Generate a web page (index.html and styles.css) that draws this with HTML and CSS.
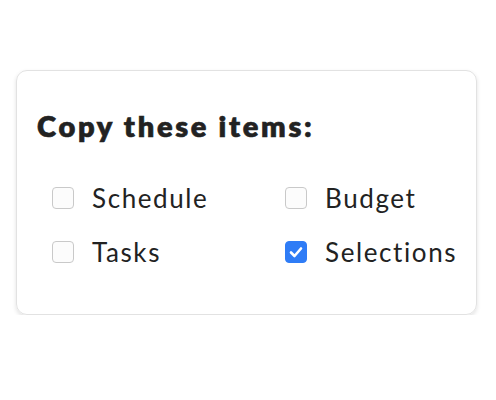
FILE: index.html
```html
<!DOCTYPE html>
<html>
<head>
<meta charset="utf-8">
<link rel="stylesheet" href="styles.css">
</head>
<body>
<div class="card">
  <h2 class="title">Copy these items:</h2>
  <div class="options">
    <label class="option"><span class="box"></span><span class="label">Schedule</span></label>
    <label class="option"><span class="box"></span><span class="label">Budget</span></label>
    <label class="option"><span class="box"></span><span class="label">Tasks</span></label>
    <label class="option"><span class="box checked"><svg viewBox="0 0 22 22" width="22" height="22"><path d="M6 11.5 L9.5 15 L16 7.5" fill="none" stroke="#fff" stroke-width="2.6" stroke-linecap="round" stroke-linejoin="round"/></svg></span><span class="label">Selections</span></label>
  </div>
</div>
</body>
</html>
```
FILE: styles.css
```css
html, body {
  margin: 0;
  padding: 0;
  background: #fff;
}
body {
  padding: 70px 19px 0 16px;
  font-family: Lato, "Noto Sans", sans-serif;
  color: #222;
}
.card {
  box-sizing: border-box;
  width: 461px;
  height: 245px;
  border: 1px solid #e2e2e2;
  border-radius: 11px;
  box-shadow: 0 2px 4px rgba(0,0,0,0.12);
  padding: 38px 20px 0 20px;
}
.title {
  margin: 0;
  font-size: 29px;
  line-height: 34px;
  font-weight: 800;
  letter-spacing: 2.7px;
  -webkit-text-stroke: 0.6px #222;
  color: #222;
}
.options {
  margin-top: 39px;
  padding-left: 15px;
  display: grid;
  grid-template-columns: 233px 1fr;
  row-gap: 22px;
}
.option {
  display: flex;
  align-items: center;
  gap: 18px;
  height: 32px;
}
.box {
  box-sizing: border-box;
  width: 22px;
  height: 22px;
  border: 1px solid #c9c9c9;
  border-radius: 4px;
  background: #fcfcfc;
  flex: none;
}
.box.checked {
  background: #2f7cf6;
  border-color: #2f7cf6;
  position: relative;
}
.box.checked svg {
  position: absolute;
  left: -1px;
  top: -1px;
}
.label {
  font-size: 26px;
  line-height: 32px;
  letter-spacing: 1.6px;
  color: #222;
}
```
